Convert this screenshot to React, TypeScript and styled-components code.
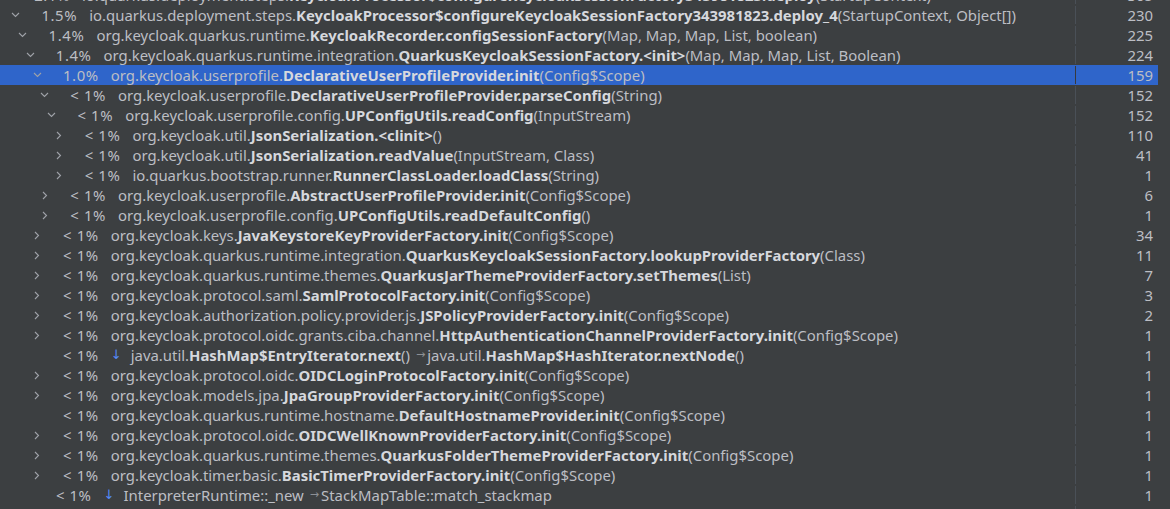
import React from "react";
import styled, { createGlobalStyle, css } from "styled-components";

const Global = createGlobalStyle`
  html, body { margin: 0; padding: 0; background: #3c3f41; }
  body { font-family: "Noto Sans", "DejaVu Sans", sans-serif; }
`;

type Node = "exp" | "col" | "none";
type Seg = { pkg: string; cls: string; args?: string; plain?: boolean };
type RowData = {
  level: number;
  pct: string;
  node: Node;
  segs: Seg[];
  hot?: boolean;
  count: string;
  selected?: boolean;
};

const rows: RowData[] = [
  { level: 0, pct: "2.1%", node: "exp", segs: [{ pkg: "io.quarkus.deployment.steps.", cls: "KeycloakProcessor$configureKeycloakSessionFactory343981823.deploy", args: "(StartupContext)" }], count: "305" },
  { level: 1, pct: "1.5%", node: "exp", segs: [{ pkg: "io.quarkus.deployment.steps.", cls: "KeycloakProcessor$configureKeycloakSessionFactory343981823.deploy_4", args: "(StartupContext, Object[])" }], count: "230" },
  { level: 2, pct: "1.4%", node: "exp", segs: [{ pkg: "org.keycloak.quarkus.runtime.", cls: "KeycloakRecorder.configSessionFactory", args: "(Map, Map, Map, List, boolean)" }], count: "225" },
  { level: 3, pct: "1.4%", node: "exp", segs: [{ pkg: "org.keycloak.quarkus.runtime.integration.", cls: "QuarkusKeycloakSessionFactory.<init>", args: "(Map, Map, Map, List, Boolean)" }], count: "224" },
  { level: 4, pct: "1.0%", node: "exp", selected: true, segs: [{ pkg: "org.keycloak.userprofile.", cls: "DeclarativeUserProfileProvider.init", args: "(Config$Scope)" }], count: "159" },
  { level: 5, pct: "< 1%", node: "exp", segs: [{ pkg: "org.keycloak.userprofile.", cls: "DeclarativeUserProfileProvider.parseConfig", args: "(String)" }], count: "152" },
  { level: 6, pct: "< 1%", node: "exp", segs: [{ pkg: "org.keycloak.userprofile.config.", cls: "UPConfigUtils.readConfig", args: "(InputStream)" }], count: "152" },
  { level: 7, pct: "< 1%", node: "col", segs: [{ pkg: "org.keycloak.util.", cls: "JsonSerialization.<clinit>", args: "()" }], count: "110" },
  { level: 7, pct: "< 1%", node: "col", segs: [{ pkg: "org.keycloak.util.", cls: "JsonSerialization.readValue", args: "(InputStream, Class)" }], count: "41" },
  { level: 7, pct: "< 1%", node: "col", segs: [{ pkg: "io.quarkus.bootstrap.runner.", cls: "RunnerClassLoader.loadClass", args: "(String)" }], count: "1" },
  { level: 5, pct: "< 1%", node: "col", segs: [{ pkg: "org.keycloak.userprofile.", cls: "AbstractUserProfileProvider.init", args: "(Config$Scope)" }], count: "6" },
  { level: 5, pct: "< 1%", node: "col", segs: [{ pkg: "org.keycloak.userprofile.config.", cls: "UPConfigUtils.readDefaultConfig", args: "()" }], count: "1" },
  { level: 4, pct: "< 1%", node: "col", segs: [{ pkg: "org.keycloak.keys.", cls: "JavaKeystoreKeyProviderFactory.init", args: "(Config$Scope)" }], count: "34" },
  { level: 4, pct: "< 1%", node: "col", segs: [{ pkg: "org.keycloak.quarkus.runtime.integration.", cls: "QuarkusKeycloakSessionFactory.lookupProviderFactory", args: "(Class)" }], count: "11" },
  { level: 4, pct: "< 1%", node: "col", segs: [{ pkg: "org.keycloak.quarkus.runtime.themes.", cls: "QuarkusJarThemeProviderFactory.setThemes", args: "(List)" }], count: "7" },
  { level: 4, pct: "< 1%", node: "col", segs: [{ pkg: "org.keycloak.protocol.saml.", cls: "SamlProtocolFactory.init", args: "(Config$Scope)" }], count: "3" },
  { level: 4, pct: "< 1%", node: "col", segs: [{ pkg: "org.keycloak.authorization.policy.provider.js.", cls: "JSPolicyProviderFactory.init", args: "(Config$Scope)" }], count: "2" },
  { level: 4, pct: "< 1%", node: "col", segs: [{ pkg: "org.keycloak.protocol.oidc.grants.ciba.channel.", cls: "HttpAuthenticationChannelProviderFactory.init", args: "(Config$Scope)" }], count: "1" },
  { level: 4, pct: "< 1%", node: "none", hot: true, segs: [{ pkg: "java.util.", cls: "HashMap$EntryIterator.next", args: "()" }, { pkg: "java.util.", cls: "HashMap$HashIterator.nextNode", args: "()" }], count: "1" },
  { level: 4, pct: "< 1%", node: "col", segs: [{ pkg: "org.keycloak.protocol.oidc.", cls: "OIDCLoginProtocolFactory.init", args: "(Config$Scope)" }], count: "1" },
  { level: 4, pct: "< 1%", node: "col", segs: [{ pkg: "org.keycloak.models.jpa.", cls: "JpaGroupProviderFactory.init", args: "(Config$Scope)" }], count: "1" },
  { level: 4, pct: "< 1%", node: "none", segs: [{ pkg: "org.keycloak.quarkus.runtime.hostname.", cls: "DefaultHostnameProvider.init", args: "(Config$Scope)" }], count: "1" },
  { level: 4, pct: "< 1%", node: "col", segs: [{ pkg: "org.keycloak.protocol.oidc.", cls: "OIDCWellKnownProviderFactory.init", args: "(Config$Scope)" }], count: "1" },
  { level: 4, pct: "< 1%", node: "col", segs: [{ pkg: "org.keycloak.quarkus.runtime.themes.", cls: "QuarkusFolderThemeProviderFactory.init", args: "(Config$Scope)" }], count: "1" },
  { level: 4, pct: "< 1%", node: "col", segs: [{ pkg: "org.keycloak.timer.basic.", cls: "BasicTimerProviderFactory.init", args: "(Config$Scope)" }], count: "1" },
  { level: 3, pct: "< 1%", node: "none", hot: true, segs: [{ pkg: "InterpreterRuntime::_new", cls: "", plain: true }, { pkg: "StackMapTable::match_stackmap", cls: "", plain: true }], count: "1" },
  { level: 3, pct: "< 1%", node: "col", segs: [{ pkg: "org.keycloak.quarkus.runtime.", cls: "KeycloakRecorder.init", args: "()" }], count: "1" },
];

const Viewport = styled.div`
  width: 1170px;
  height: 509px;
  overflow: hidden;
  background: #3c3f41;
`;

const List = styled.div`
  display: flex;
  flex-direction: column;
  margin-top: -15px;
`;

const Row = styled.div`
  display: grid;
  grid-template-columns: 1075px 83px 12px;
  height: 20px;
  font-size: 14.9px;
  line-height: 20px;
  color: #bcbec4;
  white-space: nowrap;
`;

const TreeCell = styled.div<{ $level: number; $sel?: boolean }>`
  display: flex;
  align-items: center;
  padding-left: ${(p) => 4 + p.$level * 7.2}px;
  overflow: hidden;
  background: ${(p) => (p.$sel ? "#2f65ca" : "transparent")};
`;

const Toggle = styled.span`
  flex: none;
  width: 9px;
  height: 20px;
  display: flex;
  align-items: center;
  justify-content: center;
  color: #9fa2a8;
`;

const Pct = styled.span`
  flex: none;
  width: 57px;
  text-align: right;
  letter-spacing: 0.6px;
`;

const Name = styled.span`
  margin-left: 12px;
  display: flex;
  align-items: center;
`;

const Hot = styled.span`
  color: #548af7;
  font-size: 13px;
  margin-right: 9px;
  font-family: "DejaVu Sans", sans-serif;
`;

const Cls = styled.b`
  font-weight: 700;
  color: #d6d8dd;
`;

const Via = styled.span`
  color: #8c8f94;
  font-size: 11px;
  margin: 0 2px 0 6px;
  font-family: "DejaVu Sans", sans-serif;
`;

const lineCss = css<{ $sel?: boolean }>`
  background-image: linear-gradient(${(p) => (p.$sel ? "#37393d" : "#4a5057")}, ${(p) => (p.$sel ? "#37393d" : "#4a5057")});
  background-repeat: no-repeat;
  background-position: left 1px;
  background-size: 1px calc(100% - 2px);
`;

const Count = styled.div<{ $sel?: boolean }>`
  text-align: right;
  padding-right: 5px;
  background-color: ${(p) => (p.$sel ? "#2f65ca" : "transparent")};
  ${lineCss}
`;

const Gutter = styled.div``;

const Chevron = ({ node }: { node: Node }) => {
  if (node === "exp")
    return (
      <svg width="9" height="6" viewBox="0 0 9 6" fill="none">
        <path d="M1 1l3.5 3.5L8 1" stroke="currentColor" strokeWidth="1.1" />
      </svg>
    );
  if (node === "col")
    return (
      <svg width="6" height="9" viewBox="0 0 6 9" fill="none">
        <path d="M1 1l3.5 3.5L1 8" stroke="currentColor" strokeWidth="1.1" />
      </svg>
    );
  return null;
};

const SegView = ({ s }: { s: Seg }) =>
  s.plain ? (
    <span>{s.pkg}</span>
  ) : (
    <span>
      {s.pkg}
      <Cls>{s.cls}</Cls>
      {s.args}
    </span>
  );

export default function App() {
  return (
    <>
      <Global />
      <Viewport>
        <List>
          {rows.map((r, i) => (
            <Row key={i}>
              <TreeCell $level={r.level} $sel={r.selected}>
                <Toggle>
                  <Chevron node={r.node} />
                </Toggle>
                <Pct>{r.pct}</Pct>
                <Name>
                  {r.hot && <Hot>↓</Hot>}
                  {r.segs.map((s, j) => (
                    <React.Fragment key={j}>
                      {j > 0 && <Via>→</Via>}
                      <SegView s={s} />
                    </React.Fragment>
                  ))}
                </Name>
              </TreeCell>
              <Count $sel={r.selected}>{r.count}</Count>
              <Gutter />
            </Row>
          ))}
        </List>
      </Viewport>
    </>
  );
}
